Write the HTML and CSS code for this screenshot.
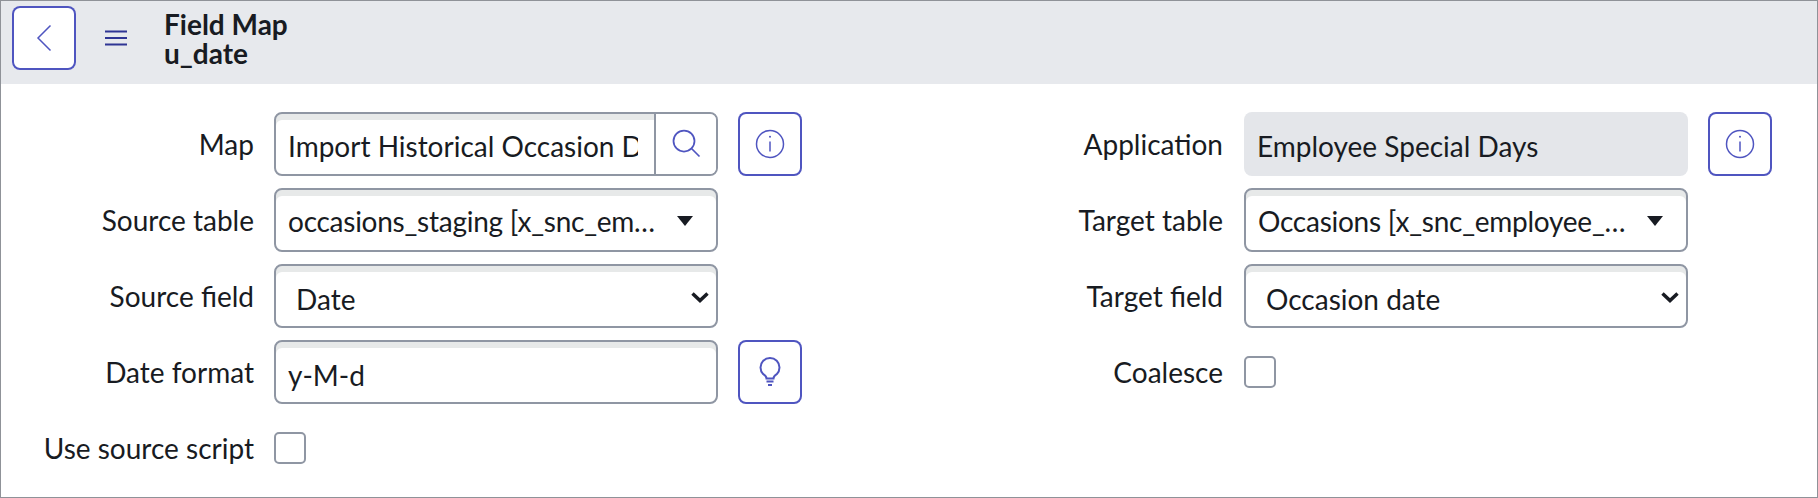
FILE: index.html
```html
<!DOCTYPE html>
<html>

<head>
    <title>Field Map - u_date</title>
    <link rel="stylesheet" href="styles.css">
</head>

<body>
    <div class="main">
        <div class="header">
            <button class="icon-button" type="button" aria-label="Back">
                <svg class="thin" width="64" height="64" viewBox="0 0 64 64"><path d="M38.500 19.500 26 32l12.500 12.500" /></svg>
            </button>
            <div class="menu-icon">
                <svg width="24" height="18" viewBox="0 0 24 18"><path d="M1 2.500h22M1 9h22M1 15.500h22" /></svg>
            </div>
            <div class="title">
                <div>Field Map</div>
                <div>u_date</div>
            </div>
        </div>

        <div class="form">
            <div class="column">
                <div class="row">
                    <div class="label">Map</div>
                    <div class="field lookup">
                        <div class="lookup-text">Import Historical Occasion D</div>
                        <div class="lookup-button">
                            <svg width="32" height="32" viewBox="0 0 32 32"><circle cx="14" cy="13" r="10.500" /><path d="m21.500 20.500 8 8" /></svg>
                        </div>
                    </div>
                    <button class="icon-button" type="button" aria-label="Info">
                        <svg class="thin" width="64" height="64" viewBox="0 0 64 64"><circle cx="32" cy="32" r="13.500" /><path d="M32 29.500v10" /><circle class="dot" cx="32" cy="24.800" r="1" /></svg>
                    </button>
                </div>
                <div class="row">
                    <div class="label">Source table</div>
                    <div class="field combo">
                        <div class="combo-text">occasions_staging [x_snc_em…</div>
                        <div class="caret"></div>
                    </div>
                </div>
                <div class="row">
                    <div class="label">Source field</div>
                    <div class="field select">
                        <div>Date</div>
                        <svg class="chevron" width="18" height="12" viewBox="0 0 18 12"><path d="m1.500 2.500 7.500 7 7.500-7" /></svg>
                    </div>
                </div>
                <div class="row">
                    <div class="label">Date format</div>
                    <div class="field">y-M-d</div>
                    <button class="icon-button" type="button" aria-label="Hint">
                        <svg width="64" height="64" viewBox="0 0 64 64"><path d="M28.500 38.500c0-1.800-1-3-3.200-4.300a9.500 9.500 0 1 1 13.400 0c-2.200 1.300-3.200 2.500-3.200 4.300zM28.500 41.500h7M30 45h4" /></svg>
                    </button>
                </div>
                <div class="row">
                    <div class="label">Use source script</div>
                    <div class="checkbox"></div>
                </div>
            </div>

            <div class="column column-right">
                <div class="row">
                    <div class="label">Application</div>
                    <div class="field readonly">Employee Special Days</div>
                    <button class="icon-button" type="button" aria-label="Info">
                        <svg class="thin" width="64" height="64" viewBox="0 0 64 64"><circle cx="32" cy="32" r="13.500" /><path d="M32 29.500v10" /><circle class="dot" cx="32" cy="24.800" r="1" /></svg>
                    </button>
                </div>
                <div class="row">
                    <div class="label">Target table</div>
                    <div class="field combo">
                        <div class="combo-text">Occasions [x_snc_employee_…</div>
                        <div class="caret"></div>
                    </div>
                </div>
                <div class="row">
                    <div class="label">Target field</div>
                    <div class="field select">
                        <div>Occasion date</div>
                        <svg class="chevron" width="18" height="12" viewBox="0 0 18 12"><path d="m1.500 2.500 7.500 7 7.500-7" /></svg>
                    </div>
                </div>
                <div class="row">
                    <div class="label">Coalesce</div>
                    <div class="checkbox"></div>
                </div>
            </div>
        </div>
    </div>
</body>

</html>
```

FILE: styles.css
```css
* {
    box-sizing: border-box;
}

body {
    margin: 0;
    font-family: "Lato", "Liberation Sans", sans-serif;
    font-size: 28px;
    color: #181b22;
    background-color: #ffffff;
}

.main {
    height: 498px;
    border: 1px solid #8f9298;
    overflow: hidden;
}

.header {
    height: 83px;
    background-color: #e7e9ed;
    display: flex;
    align-items: center;
    padding-left: 11px;
    padding-bottom: 10px;
}

.title {
    font-size: 28px;
    font-weight: 700;
    line-height: 29px;
    margin-left: 36px;
    padding-top: 2px;
}

.menu-icon {
    width: 24px;
    height: 18px;
    margin-left: 28px;
}

.menu-icon svg {
    display: block;
    fill: none;
    stroke: #2f3594;
    stroke-width: 2;
}

.icon-button {
    width: 64px;
    height: 64px;
    flex: none;
    padding: 0;
    margin: 0;
    background-color: #ffffff;
    border: 0;
    border-radius: 8px;
    box-shadow: inset 0 0 0 2px #4f55c0;
}

.icon-button svg {
    display: block;
    fill: none;
    stroke: #4f55c0;
    stroke-width: 2;
}

.icon-button svg.thin {
    stroke-width: 1.500;
}

.icon-button svg .dot {
    fill: #4f55c0;
    stroke: none;
}

.form {
    display: grid;
    grid-template-columns: 970px 1fr;
    padding-top: 28px;
}

.column {
    display: flex;
    flex-direction: column;
    gap: 12px;
}

.row {
    display: flex;
    align-items: center;
    height: 64px;
}

.label {
    width: 253px;
    flex: none;
    text-align: right;
    margin-right: 20px;
    padding-bottom: 1px;
}

.column-right .label {
    width: 252px;
    margin-right: 21px;
}

.field {
    width: 444px;
    height: 64px;
    flex: none;
    margin-right: 20px;
    padding: 5px 12px 0;
    display: flex;
    align-items: center;
    background-color: #ffffff;
    border: 2px solid #8f96a3;
    border-radius: 8px;
    box-shadow: inset 0 6px 0 #e7e9e9;
}

.readonly {
    border: 0;
    padding: 4px 13px 0;
    background-color: #e4e6ea;
    box-shadow: none;
}

.lookup {
    padding: 0;
}

.lookup-text {
    width: 350px;
    flex: none;
    white-space: nowrap;
    overflow: hidden;
    margin: 3px 16px 0 12px;
}

.lookup-button {
    flex: 1;
    height: 100%;
    border-left: 2px solid #8f96a3;
    background-color: #ffffff;
    border-radius: 0 6px 6px 0;
    display: flex;
    align-items: center;
    justify-content: center;
}

.lookup-button svg {
    fill: none;
    stroke: #4f55c0;
    stroke-width: 1.750;
}

.combo {
    padding-top: 1px;
}

.combo-text {
    flex: 1;
    min-width: 0;
    white-space: nowrap;
    letter-spacing: -0.250px;
}

.caret {
    flex: none;
    width: 0;
    height: 0;
    margin: 0 11px 0 20px;
    border-left: 8px solid transparent;
    border-right: 8px solid transparent;
    border-top: 10px solid #181b22;
}

.select {
    padding-left: 20px;
    justify-content: space-between;
    padding-right: 7px;
}

.chevron {
    fill: none;
    stroke: #181b22;
    stroke-width: 3.500;
    margin-bottom: 4px;
}

.checkbox {
    width: 32px;
    height: 32px;
    flex: none;
    background-color: #ffffff;
    border: 2px solid #8f96a3;
    border-radius: 5px;
}
```
